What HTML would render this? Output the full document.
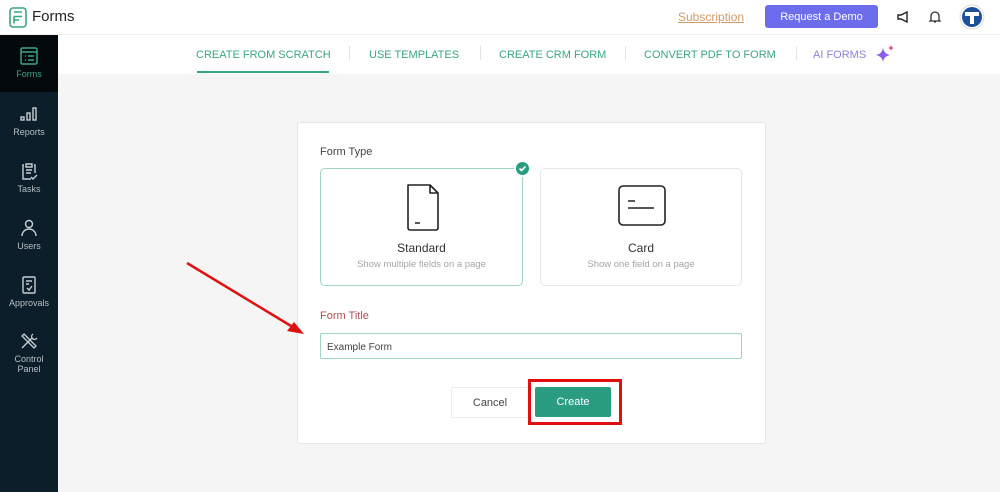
<!DOCTYPE html>
<html><head><meta charset="utf-8"><style>
*{box-sizing:border-box;margin:0;padding:0}
body{width:1000px;height:492px;overflow:hidden;font-family:"Liberation Sans",sans-serif;background:#f5f5f5;position:relative}
.abs{position:absolute}
.top{left:0;top:0;width:1000px;height:35px;background:#fff;border-bottom:1px solid #eee}
.side{left:0;top:35px;width:58px;height:457px;background:#0b1e29}
.si{position:absolute;left:0;width:58px;text-align:center;color:#b8bfc4;font-size:9px;line-height:10px}
.si svg{display:block;margin:0 auto 3px}
.tabs{left:58px;top:35px;width:942px;height:39px;background:#fff}
.tab{position:absolute;top:14px;font-size:11px;color:#3aa586;white-space:nowrap}
.sep{position:absolute;top:11px;width:1px;height:14px;background:#e3e3e3}
.card{left:297px;top:122px;width:469px;height:322px;background:#fff;border:1px solid #e6e6e6;border-radius:3px}
.opt{position:absolute;top:168px;width:203px;height:118px;border:1px solid #e6e6e6;border-radius:5px;background:#fff;text-align:center}
.opt h4{position:absolute;top:72px;width:100%;font-size:12px;font-weight:normal;color:#333}
.opt p{position:absolute;top:90px;width:100%;font-size:9.5px;color:#a5a5a5}
.btn{display:flex;align-items:center;justify-content:center}
</style></head><body>
<div class="abs top"></div>
<svg class="abs" style="left:9px;top:7px" width="18" height="21" viewBox="0 0 18 21"><rect x="1" y="1" width="16" height="19" rx="3" fill="none" stroke="#3aa586" stroke-width="1.6"/><path d="M5 5h8M5 9.5h8M5 9.5v7M5 13h5" stroke="#3aa586" stroke-width="1.6" fill="none"/></svg>
<div class="abs" style="left:32px;top:8px;font-size:15px;color:#222">Forms</div>
<div class="abs" style="left:678px;top:10px;font-size:12px;color:#d09a6a;text-decoration:underline">Subscription</div>
<div class="abs btn" style="left:765px;top:5px;width:113px;height:23px;background:#6c6cec;border-radius:3px;color:#fff;font-size:11px">Request a Demo</div>
<svg class="abs" style="left:896px;top:10px" width="14" height="14" viewBox="0 0 14 14"><path d="M2 5h3l6-3v10L5 9H2z" fill="none" stroke="#222" stroke-width="1.4"/></svg>
<svg class="abs" style="left:928px;top:9px" width="14" height="15" viewBox="0 0 14 15"><path d="M3 11V7a4 4 0 018 0v4l1 1H2z M6 13h2" fill="none" stroke="#333" stroke-width="1.3"/></svg>
<svg class="abs" style="left:959px;top:4px" width="26" height="26" viewBox="0 0 26 26"><circle cx="13" cy="13" r="12" fill="#fff" stroke="#ddd"/><circle cx="13" cy="13" r="10" fill="#1e4f9c"/><path d="M6 8h14v4h-5v8h-4v-8H6z" fill="#fff"/></svg>

<div class="abs side">
 <div class="si" style="top:0;height:57px;background:#03090c;color:#3aa586;padding-top:11px"><svg width="20" height="20" viewBox="0 0 20 20"><rect x="2" y="2" width="16" height="16" rx="1.5" fill="none" stroke="#3aa586" stroke-width="1.5"/><path d="M2 6h16M6 10h1M9 10h6M6 14h1M9 14h6" stroke="#3aa586" stroke-width="1.5"/></svg>Forms</div>
 <div class="si" style="top:71px"><svg width="20" height="18" viewBox="0 0 20 18"><rect x="2" y="11" width="3" height="3" fill="none" stroke="#c8ced2" stroke-width="1.4"/><rect x="8" y="7" width="3" height="7" fill="none" stroke="#c8ced2" stroke-width="1.4"/><rect x="14" y="2" width="3" height="12" fill="none" stroke="#c8ced2" stroke-width="1.4"/></svg>Reports</div>
 <div class="si" style="top:126px"><svg width="20" height="20" viewBox="0 0 20 20"><path d="M5 4h-1v14h8M15 4h1v8M7 3h6v3H7zM7 9h6M7 12h5M12 16l2 2 4-4" fill="none" stroke="#c8ced2" stroke-width="1.4"/></svg>Tasks</div>
 <div class="si" style="top:183px"><svg width="20" height="20" viewBox="0 0 20 20"><circle cx="10" cy="6" r="3.5" fill="none" stroke="#c8ced2" stroke-width="1.4"/><path d="M3 18a7 7 0 0114 0" fill="none" stroke="#c8ced2" stroke-width="1.4"/></svg>Users</div>
 <div class="si" style="top:240px"><svg width="20" height="20" viewBox="0 0 20 20"><rect x="4" y="2" width="12" height="16" rx="1" fill="none" stroke="#c8ced2" stroke-width="1.4"/><path d="M7 6h6M7 9h3M8 13l2 2 3-4" fill="none" stroke="#c8ced2" stroke-width="1.4"/></svg>Approvals</div>
 <div class="si" style="top:296px"><svg width="20" height="20" viewBox="0 0 20 20"><path d="M3 17L13 7M14 3a3 3 0 00-1 4l1 1a3 3 0 004-1M5 3l12 12-2 2L3 5z" fill="none" stroke="#c8ced2" stroke-width="1.3"/></svg>Control<br>Panel</div>
</div>

<div class="abs tabs">
 <div class="tab" style="left:138px">CREATE FROM SCRATCH</div>
 <div class="sep" style="left:291px"></div>
 <div class="tab" style="left:311px">USE TEMPLATES</div>
 <div class="sep" style="left:422px"></div>
 <div class="tab" style="left:441px">CREATE CRM FORM</div>
 <div class="sep" style="left:567px"></div>
 <div class="tab" style="left:586px">CONVERT PDF TO FORM</div>
 <div class="sep" style="left:738px"></div>
 <div class="tab" style="left:755px;color:#8d7fd6">AI FORMS</div>
 <svg style="position:absolute;left:817px;top:10px" width="20" height="18" viewBox="0 0 20 18"><path d="M8 3q1 6 7 7q-6 1-7 7q-1-6-7-7q6-1 7-7z" fill="#8a5ee8"/><path d="M16 0q.5 2.5 3 3q-2.5.5-3 3q-.5-2.5-3-3q2.5-.5 3-3z" fill="#e0508a"/></svg>
 <div style="position:absolute;left:139px;top:36px;width:132px;height:2px;background:#3aa586"></div>
</div>

<div class="abs card"></div>
<div class="abs" style="left:320px;top:146px;font-size:11px;color:#444">Form Type</div>
<div class="opt" style="left:320px;border-color:#9fd3c4">
 <svg style="position:absolute;left:84px;top:14px" width="35" height="49" viewBox="0 0 35 49"><path d="M3 2h22l8 8v35a2 2 0 01-2 2H5a2 2 0 01-2-2z M25 2v8h8 M10 40h5" fill="none" stroke="#222" stroke-width="1.6" stroke-linejoin="round"/></svg>
 <h4>Standard</h4><p>Show multiple fields on a page</p>
</div>
<div class="abs" style="left:514px;top:160px;width:17px;height:17px;border-radius:50%;background:#2a9d80;border:2px solid #fff"><svg width="13" height="13" viewBox="0 0 13 13" style="display:block"><path d="M3.5 6.5l2 2 4-4" fill="none" stroke="#fff" stroke-width="1.6"/></svg></div>
<div class="opt" style="left:540px;width:202px">
 <svg style="position:absolute;left:76px;top:15px" width="50" height="43" viewBox="0 0 50 43"><rect x="2" y="2" width="46" height="39" rx="4" fill="none" stroke="#222" stroke-width="1.6"/><path d="M11 17h7M11 24h26" stroke="#222" stroke-width="1.6"/></svg>
 <h4>Card</h4><p>Show one field on a page</p>
</div>
<div class="abs" style="left:320px;top:310px;font-size:11px;color:#b5504f">Form Title</div>
<div class="abs" style="left:320px;top:333px;width:422px;height:26px;border:1px solid #9fd3c4;border-radius:2px;font-size:10px;color:#444;padding:8px 0 0 6px">Example Form</div>
<div class="abs btn" style="left:451px;top:387px;width:78px;height:31px;border:1px solid #ececec;border-radius:2px;background:#fff;font-size:11px;color:#444">Cancel</div>
<div class="abs" style="left:528px;top:379px;width:94px;height:46px;border:3px solid #e01010"></div>
<div class="abs btn" style="left:535px;top:387px;width:76px;height:30px;background:#2a9d80;border-radius:2px;color:#fff;font-size:11px">Create</div>
<svg class="abs" style="left:0;top:0" width="1000" height="492"><line x1="187" y1="263" x2="296" y2="329" stroke="#e01010" stroke-width="2.5"/><path d="M304 334L287 331L294 322Z" fill="#e01010"/></svg>
</body></html>
